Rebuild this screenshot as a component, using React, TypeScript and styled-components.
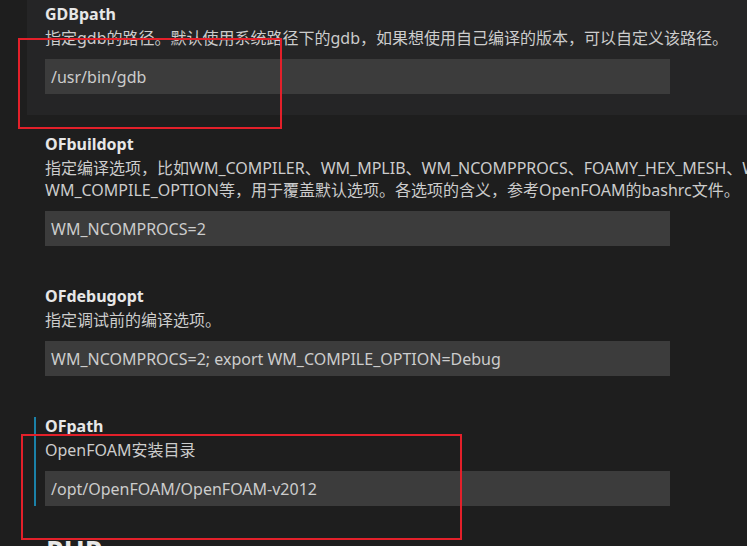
import styled, { createGlobalStyle } from "styled-components"

const GlobalStyle = createGlobalStyle`
    html, body {
        margin: 0;
        padding: 0;
        background: #1e1e1e;
        overflow: hidden;
    }
    body {
        font-family: "Noto Sans", "Noto Sans CJK SC", sans-serif;
    }
`

const Page = styled.div`
    position: relative;
    width: 747px;
    height: 546px;
    overflow: hidden;
    background: #1e1e1e;
`
const List = styled.div`
    margin-top: -15px;
`
const Item = styled.div<{ $focused?: boolean }>`
    margin-left: 27px;
    padding: 20px 0 21px 7px;
    background: ${props => props.$focused ? "#252526" : "transparent"};
`
const Content = styled.div<{ $modified?: boolean }>`
    border-left: 2px solid ${props => props.$modified ? "#1b81a8" : "transparent"};
    padding-left: 9px;
`
const Title = styled.div`
    font-size: 16px;
    line-height: 18px;
    font-weight: 700;
    color: #e7e7e7;
`
const Desc = styled.div`
    margin-top: 4px;
    font-size: 16px;
    line-height: 22px;
    color: #cccccc;
    white-space: nowrap;
`
const DescLine = styled.span`
    display: block;
`
const Input = styled.div`
    margin-top: 10px;
    width: 625px;
    height: 35px;
    box-sizing: border-box;
    padding-left: 6px;
    display: flex;
    align-items: center;
    background: #3c3c3c;
    color: #cccccc;
    font-size: 16px;
    white-space: nowrap;
`
const Heading = styled.div`
    margin: 7px 0 0 46px;
    font-size: 28px;
    line-height: 34px;
    font-weight: 700;
    color: #e7e7e7;
`
const Mark = styled.div<{ $left: number; $top: number; $w: number; $h: number }>`
    position: absolute;
    left: ${props => props.$left}px;
    top: ${props => props.$top}px;
    width: ${props => props.$w}px;
    height: ${props => props.$h}px;
    box-sizing: border-box;
    border: 2px solid #e3202a;
    pointer-events: none;
`

const App = () => {
    return (
        <Page>
            <GlobalStyle />
            <List>
                <Item $focused>
                    <Content>
                        <Title>GDBpath</Title>
                        <Desc>指定gdb的路径。默认使用系统路径下的gdb，如果想使用自己编译的版本，可以自定义该路径。</Desc>
                        <Input>/usr/bin/gdb</Input>
                    </Content>
                </Item>
                <Item>
                    <Content>
                        <Title>OFbuildopt</Title>
                        <Desc>
                            <DescLine>指定编译选项，比如WM_COMPILER、WM_MPLIB、WM_NCOMPPROCS、FOAMY_HEX_MESH、WM_LABEL_SIZE、</DescLine>
                            <DescLine>WM_COMPILE_OPTION等，用于覆盖默认选项。各选项的含义，参考OpenFOAM的bashrc文件。</DescLine>
                        </Desc>
                        <Input>WM_NCOMPROCS=2</Input>
                    </Content>
                </Item>
                <Item>
                    <Content>
                        <Title>OFdebugopt</Title>
                        <Desc>指定调试前的编译选项。</Desc>
                        <Input>WM_NCOMPROCS=2; export WM_COMPILE_OPTION=Debug</Input>
                    </Content>
                </Item>
                <Item>
                    <Content $modified>
                        <Title>OFpath</Title>
                        <Desc>OpenFOAM安装目录</Desc>
                        <Input>/opt/OpenFOAM/OpenFOAM-v2012</Input>
                    </Content>
                </Item>
                <Heading>PHP</Heading>
            </List>
            <Mark $left={18} $top={38} $w={264} $h={91} />
            <Mark $left={21} $top={434} $w={441} $h={106} />
        </Page>
    )
}

export default App
